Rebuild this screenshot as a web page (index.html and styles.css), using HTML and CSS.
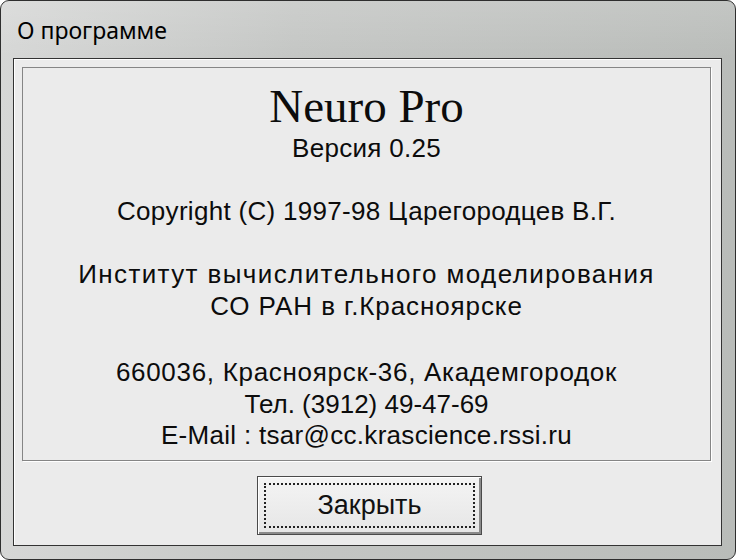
FILE: index.html
```html
<!DOCTYPE html>
<html lang="ru">
<head>
    <meta charset="UTF-8">
    <meta name="viewport" content="width=device-width, initial-scale=1.0">
    <title>О программе</title>
    <link rel="stylesheet" href="styles.css">
</head>
<body>
    <div class="window">
        <div class="title-bar">О программе</div>
        <div class="client">
            <div class="about-panel">
                <div class="product">Neuro Pro</div>
                <div class="line tight">Версия 0.25</div>
                <div class="line gap tight">Copyright (C) 1997-98 Царегородцев В.Г.</div>
                <div class="line gap">Институт вычислительного моделирования</div>
                <div class="line medium">СО РАН в г.Красноярске</div>
                <div class="line gap-big narrow">660036, Красноярск-36, Академгородок</div>
                <div class="line plain">Тел. (3912) 49-47-69</div>
                <div class="line tight">E-Mail : tsar@cc.krascience.rssi.ru</div>
            </div>
            <div class="button-row">
                <button class="close-button"><span class="focus">Закрыть</span></button>
            </div>
        </div>
    </div>
</body>
</html>
```

FILE: styles.css
```css
body {
    margin: 0;
    background-color: #ffffff;
    font-family: "Liberation Sans", Arial, sans-serif;
}

.window {
    width: 736px;
    height: 560px;
    box-sizing: border-box;
    border: 1px solid #2e2e2e;
    border-radius: 9px;
    background: linear-gradient(to right, #d6d7d6 0%, #c4c6c4 40%, #b9bcb9 100%);
    display: flex;
    flex-direction: column;
    overflow: hidden;
}

.title-bar {
    height: 57px;
    padding-left: 16px;
    display: flex;
    align-items: center;
    font-family: "Noto Sans", "Open Sans", sans-serif;
    font-size: 23px;
    color: #000;
    background: linear-gradient(to bottom, rgba(255,255,255,0.15), rgba(255,255,255,0));
}

.client {
    flex: 1;
    margin: 0 13px 13px 12px;
    border: 1px solid #333;
    box-shadow: inset 1px 1px 0 #ffffff;
    background-color: #ebebeb;
    display: flex;
    flex-direction: column;
    padding: 8px 10px 0 8px;
}

.about-panel {
    height: 394px;
    box-sizing: border-box;
    border: 1px solid #858585;
    box-shadow: 1px 1px 0 #ffffff;
    text-align: center;
    color: #0c0c0c;
    padding-top: 15px;
}

.product {
    font-family: "Liberation Serif", "Times New Roman", serif;
    font-size: 47px;
    line-height: 47px;
    margin-bottom: 3px;
}

.line {
    font-size: 26px;
    line-height: 31.5px;
    letter-spacing: 1.4px;
}

.line.tight {
    letter-spacing: 0.3px;
}

.line.medium {
    letter-spacing: 0.9px;
}

.line.narrow {
    letter-spacing: 0.7px;
}

.line.plain {
    letter-spacing: 0;
}

.line.gap {
    margin-top: 31.5px;
}

.line.gap-big {
    margin-top: 35px;
}

.button-row {
    display: flex;
    justify-content: center;
    padding-top: 15px;
    padding-left: 6px;
}

.close-button {
    width: 225px;
    height: 59px;
    padding: 6px;
    border: 1px solid #4a4a4a;
    background: linear-gradient(to bottom, #f4f4f4, #e6e6e6);
    box-shadow: inset 1px 1px 0 #ffffff, inset -2px -2px 0 #8a8a8a;
    font-family: "Liberation Sans", Arial, sans-serif;
    font-size: 27px;
    color: #111;
}

.close-button .focus {
    display: flex;
    align-items: center;
    justify-content: center;
    height: 100%;
    box-sizing: border-box;
    border: 2px dotted #222;
}
```
